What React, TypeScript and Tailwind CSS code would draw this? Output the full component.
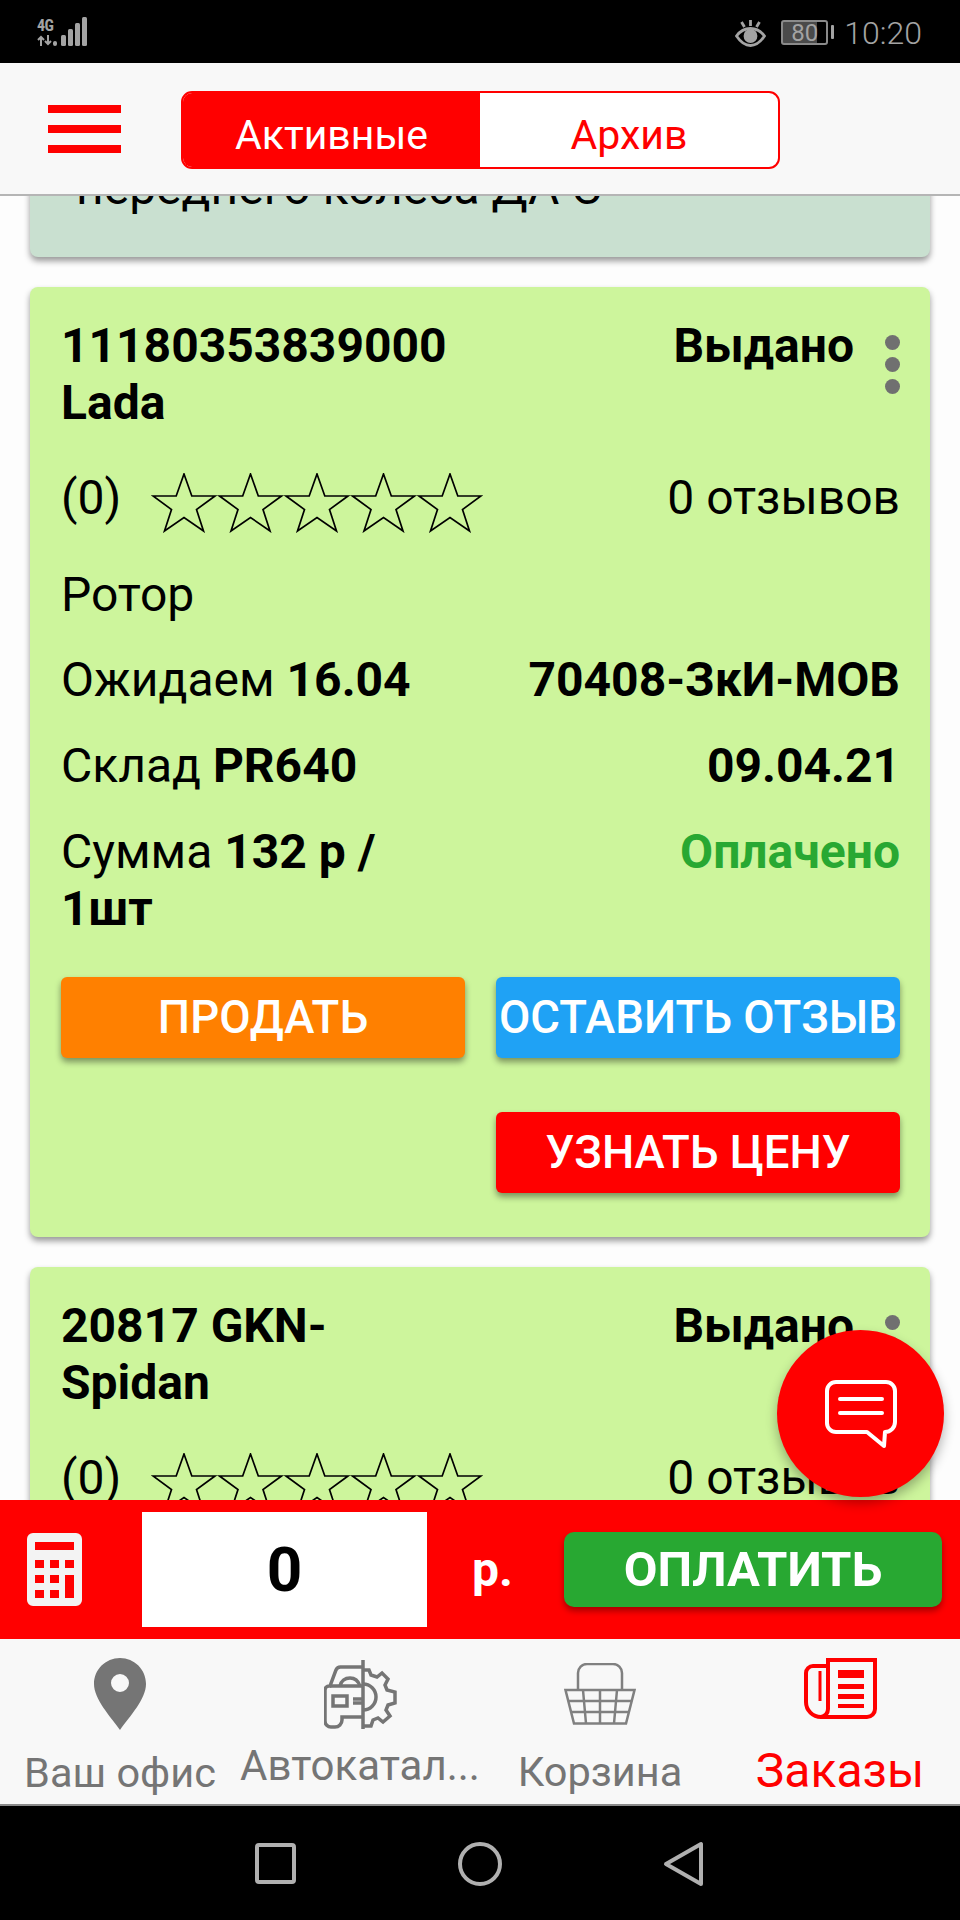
import type { ReactNode } from "react";

function StatusBar() {
  return (
    <div className="flex h-[63px] shrink-0 items-start justify-between bg-black pl-[37px] pr-[38px] text-[#a3a3a3]">
      {/* Signal */}
      <div className="flex items-end pt-[17px]">
        <div className="flex w-[19px] flex-col">
          <span className="text-[16px] font-bold leading-[15px] tracking-[-0.5px] [font-stretch:condensed]">4G</span>
          <svg width="17" height="11" viewBox="0 0 17 11" className="mt-[2px]" fill="none" stroke="currentColor" strokeWidth="2">
            <path d="M4 11V2M1 5l3-3 3 3M11 0v9M8 6l3 3 3-3" />
          </svg>
        </div>
        <svg width="34" height="29" viewBox="0 0 34 29" className="-ml-[3px]" fill="currentColor">
          <rect x="0" y="24" width="4" height="5" rx="2" />
          <rect x="8" y="18" width="5" height="11" rx="1.5" />
          <rect x="15" y="12" width="5" height="17" rx="1.5" />
          <rect x="22" y="6" width="5" height="23" rx="1.5" />
          <rect x="29" y="0" width="5" height="29" rx="1.5" />
        </svg>
      </div>

      <div className="flex items-start pt-[20px]">
        {/* Eye comfort */}
        <svg width="31" height="27" viewBox="0 0 31 27" fill="none" stroke="currentColor" strokeWidth="2.800">
          <path d="M1.500 16c4-5.500 8.500-7.500 14-7.500s10 2 14 7.500c-4 6-8.500 9.500-14 9.500S5.500 22 1.500 16z" />
          <circle cx="15.500" cy="16" r="5.500" fill="currentColor" />
          <path d="M15.500 0v6M6.500 2l3 5M24.500 2l-3 5" />
        </svg>

        {/* Battery */}
        <div className="ml-[15px] flex h-[25px] w-[47px] items-center justify-center rounded-[3px] border-2 border-[#8a8a8a] bg-[linear-gradient(90deg,#4a4a4a_78%,#000_78%)] text-[24px] leading-none">
          80
        </div>
        <div className="ml-[3px] mt-[5px] h-[14px] w-[3px] rounded-[1px] bg-[#a3a3a3]" />

        <span className="-mt-[1px] ml-[10px] text-[32px] font-light leading-[28px]">10:20</span>
      </div>
    </div>
  );
}

function Header() {
  return (
    <div className="relative z-10 flex h-[133px] shrink-0 items-start border-b-2 border-[#b5b5b5] bg-[#f8f8f8] pl-[48px]">
      <div className="mt-[42px] flex w-[73px] flex-col gap-[12px]">
        <div className="h-[8px] bg-[#ff0000]" />
        <div className="h-[8px] bg-[#ff0000]" />
        <div className="h-[8px] bg-[#ff0000]" />
      </div>
      <div className="ml-[60px] mt-[28px] flex h-[78px] w-[599px] overflow-hidden rounded-[11px] border-2 border-[#ff0000] bg-white text-[41px] leading-none">
        <div className="flex w-[297px] items-center justify-center bg-[#ff0000] pt-[11px] text-white">Активные</div>
        <div className="flex flex-1 items-center justify-center pt-[11px] text-[#ff0000]">Архив</div>
      </div>
    </div>
  );
}

function Stars() {
  return (
    <svg width="332" height="60" viewBox="0 0 332 60" fill="none" stroke="#000" strokeWidth="1.700" className="ml-[30px] mt-[4px] block">
      {[0, 66.5, 133, 199.5, 266].map((x) => (
        <path
          key={x}
          transform={`translate(${x} 0)`}
          d="M33 1 40.800 23H64L45.500 36.500 52.500 58 33 44.500 13.500 58 20.500 36.500 2 23H25.200Z"
        />
      ))}
    </svg>
  );
}

function Btn({ color, children }: { color: string; children: ReactNode }) {
  return (
    <div
      className={`flex h-[81px] items-center justify-center whitespace-nowrap rounded-[6px] text-[45.5px] font-medium leading-none text-white shadow-[0_4px_6px_rgba(0,0,0,0.4)] ${color}`}
    >
      {children}
    </div>
  );
}

function OrderCard({ title }: { title: string }) {
  return (
    <div className="mt-[30px] rounded-[8px] bg-[#cdf59c] pb-[44px] pl-[31px] pr-[30px] pt-[30px] text-[48px] leading-[57px] text-black shadow-[0_4px_6px_rgba(0,0,0,0.4)]">
      <div className="flex justify-between">
        <div className="w-[400px] font-bold">{title}</div>
        <div className="flex items-start">
          <span className="font-bold">Выдано</span>
          <div className="ml-[31px] mt-[18px] flex flex-col gap-[7px]">
            <div className="h-[15px] w-[15px] rounded-full bg-[#707070]" />
            <div className="h-[15px] w-[15px] rounded-full bg-[#707070]" />
            <div className="h-[15px] w-[15px] rounded-full bg-[#707070]" />
          </div>
        </div>
      </div>

      <div className="mt-[38px] flex items-start justify-between">
        <div className="flex items-start">
          <span>(0)</span>
          <Stars />
        </div>
        <span>0 отзывов</span>
      </div>

      <div className="mt-[33px]">Ротор</div>

      <div className="mt-[28px] flex justify-between">
        <span>
          Ожидаем <b>16.04</b>
        </span>
        <b>70408-ЗкИ-МОВ</b>
      </div>

      <div className="mt-[29px] flex justify-between">
        <span>
          Склад <b>PR640</b>
        </span>
        <b>09.04.21</b>
      </div>

      <div className="mt-[29px] flex items-start justify-between">
        <span className="w-[400px]">
          Сумма <b>132 р / 1шт</b>
        </span>
        <b className="text-[#28a832]">Оплачено</b>
      </div>

      <div className="mt-[40px] grid grid-cols-2 gap-x-[31px] gap-y-[54px]">
        <Btn color="bg-[#ff8000]">ПРОДАТЬ</Btn>
        <Btn color="bg-[#1fa2f5]">ОСТАВИТЬ ОТЗЫВ</Btn>
        <div />
        <Btn color="bg-[#ff0000]">УЗНАТЬ ЦЕНУ</Btn>
      </div>
    </div>
  );
}

function Calculator() {
  return (
    <svg width="55" height="73" viewBox="0 0 55 73" className="shrink-0">
      <path
        fillRule="evenodd"
        fill="#f3f3f3"
        d="M6 0H49a6 6 0 0 1 6 6V67a6 6 0 0 1-6 6H6a6 6 0 0 1-6-6V6a6 6 0 0 1 6-6ZM8 9V17H47V9ZM8 27V35H17V27ZM23 27V35H32V27ZM38 27V35H47V27ZM8 42V50H17V42ZM23 42V50H32V42ZM38 42V65H47V42ZM8 57V65H17V57ZM23 57V65H32V57Z"
      />
    </svg>
  );
}

function PayBar() {
  return (
    <div className="flex h-[139px] shrink-0 items-center bg-[#ff0000] pl-[27px] pr-[18px]">
      <Calculator />
      <div className="ml-[60px] flex h-[115px] w-[285px] items-center justify-center bg-white text-[62px] font-bold text-black">
        0
      </div>
      <span className="ml-[45px] text-[48px] font-bold text-white">р.</span>
      <div className="ml-auto flex h-[75px] w-[378px] items-center justify-center rounded-[10px] bg-[#28a832] text-[49px] font-bold text-white shadow-[0_4px_6px_rgba(0,0,0,0.35)]">
        ОПЛАТИТЬ
      </div>
    </div>
  );
}

function PinIcon() {
  return (
    <svg width="52" height="72" viewBox="0 0 52 72" fill="#757575">
      <path
        fillRule="evenodd"
        d="M26 0C11.600 0 0 11.600 0 26 0 41 16 58 26 72 36 58 52 41 52 26 52 11.600 40.400 0 26 0ZM26 16a9 9 0 1 1 0 18 9 9 0 0 1 0-18Z"
      />
    </svg>
  );
}

function CarGearIcon() {
  return (
    <svg width="73" height="69" viewBox="14 9 73 69" fill="none" stroke="#757575" strokeWidth="3.500">
      <path d="M53 9V78" />
      {/* car half */}
      <path d="M53 16H31a5 5 0 0 0-5 3L20 35h-1a4 4 0 0 0-4 4V70a6 6 0 0 0 6 6h4a7 7 0 0 0 7-7V66H53" />
      <path d="M20 35H53" />
      <path d="M30 35c1-5 5-8 10-8s8 2 10 8" />
      <rect x="23" y="45" width="14" height="10" />
      <path d="M43 48H53M43 52H53" />
      {/* gear half */}
      <path d="M53 19H59L61 24 67 26 72 22 78 28 75 34 77 39 85 41V52L78 54 76 59 80 65 73 71 68 67 63 69 61 75H53" />
      <path d="M53 33a13 13 0 0 1 0 26" />
    </svg>
  );
}

function BasketIcon() {
  return (
    <svg width="72" height="62" viewBox="0 0 72 62" fill="none" stroke="#808080" strokeWidth="2.500">
      <path d="M14 27V10A9 9 0 0 1 23 1H49A9 9 0 0 1 58 10V27" />
      <path d="M1.500 27H70.500L62 60.500H10Z" />
      <path d="M4.500 38H67.500M7.500 49H64.500M19 27 22 60.500M36 27V60.500M53 27 50 60.500" />
    </svg>
  );
}

function NewspaperIcon() {
  return (
    <svg width="73" height="61" viewBox="14 7 73 61" fill="none" stroke="#ff0000" strokeWidth="4" className="-translate-y-[6px]">
      <path d="M38 15V9H85V58a8 8 0 0 1-8 8H30" />
      <path d="M38 15H23a7 7 0 0 0-7 7V51A15 15 0 0 0 31 66 8 8 0 0 0 38 58V15Z" />
      <path d="M30 20V50" strokeWidth="3" />
      <g fill="#ff0000" stroke="none">
        <rect x="48" y="19" width="26" height="8" />
        <rect x="48" y="33" width="26" height="5" />
        <rect x="48" y="43" width="26" height="5" />
        <rect x="48" y="53" width="26" height="4" />
      </g>
    </svg>
  );
}

const tabs = [
  { label: "Ваш офис", icon: <PinIcon />, labelClass: "mt-[18px] text-[41.5px] text-[#757575]" },
  { label: "Автокатал...", icon: <CarGearIcon />, labelClass: "mt-[11px] text-[42px] text-[#757575]" },
  { label: "Корзина", icon: <BasketIcon />, labelClass: "mt-[17px] text-[41.5px] text-[#757575]" },
  { label: "Заказы", icon: <NewspaperIcon />, labelClass: "mt-[16px] text-[48px] text-[#ff0000]" },
];

function TabBar() {
  return (
    <div className="grid h-[167px] shrink-0 grid-cols-4 border-b-2 border-[#8a8a8a] bg-[#f8f8f8]">
      {tabs.map((t) => (
        <div key={t.label} className="flex flex-col items-center pt-[19px]">
          <div className="flex h-[72px] items-center justify-center">{t.icon}</div>
          <div className={`whitespace-nowrap leading-[50px] ${t.labelClass}`}>{t.label}</div>
        </div>
      ))}
    </div>
  );
}

function NavBar() {
  return (
    <div className="flex h-[114px] shrink-0 items-start bg-black pl-[255px] pt-[35px]">
      <svg width="448" height="46" viewBox="0 0 448 46" fill="none" stroke="#b0b0b0" strokeWidth="4" strokeLinejoin="round">
        <rect x="2" y="4" width="37" height="37" rx="2" />
        <circle cx="225" cy="23" r="20" />
        <path d="M446 3V43L411 23Z" />
      </svg>
    </div>
  );
}

export default function App() {
  return (
    <div className="relative flex h-[1920px] w-[960px] flex-col overflow-hidden bg-white font-[Roboto,sans-serif]">
      <StatusBar />
      <Header />

      <div className="min-h-0 flex-1 overflow-hidden bg-[#fdfdfd]">
        <div className="-mt-[71px] px-[30px]">
          <div className="h-[132px] rounded-[8px] bg-[#c9e0d0] pl-[46px] pt-[34px] text-[48px] leading-[57px] text-black shadow-[0_4px_6px_rgba(0,0,0,0.4)]">
            переднего колеса ДА С
          </div>
          <OrderCard title="11180353839000 Lada" />
          <OrderCard title="20817 GKN-Spidan" />
        </div>
      </div>

      <PayBar />
      <TabBar />
      <NavBar />

      {/* Chat button */}
      <div className="absolute left-[777px] top-[1330px] flex h-[167px] w-[167px] items-center justify-center rounded-full bg-[#ff0000] shadow-[0_6px_12px_rgba(0,0,0,0.3)]">
        <svg width="72" height="68" viewBox="0 0 72 68" fill="none" stroke="#fff" strokeWidth="4" strokeLinejoin="round">
          <path d="M11 2H61a9 9 0 0 1 9 9V42a10 10 0 0 1-10 10L59 66 42 52H11a9 9 0 0 1-9-9V11a9 9 0 0 1 9-9Z" />
          <path d="M15 19H57M15 33H57" strokeLinecap="round" />
        </svg>
      </div>
    </div>
  );
}
